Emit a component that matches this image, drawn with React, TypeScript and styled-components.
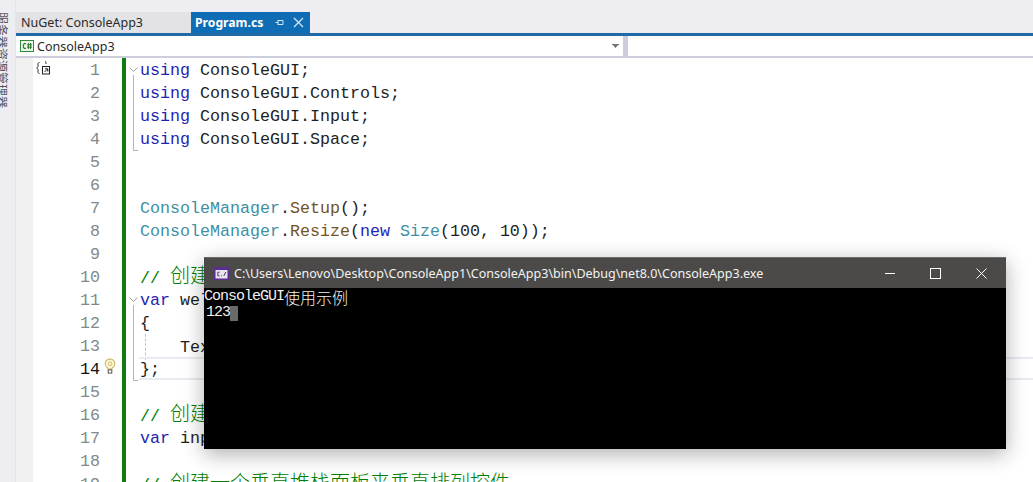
import React from 'react'
import styled, { createGlobalStyle } from 'styled-components'

type TokenKind = 'plain' | 'keyword' | 'type' | 'method' | 'comment'

interface CodeToken {
  kind: TokenKind
  text: string
}

interface CodeLine {
  tokens: CodeToken[]
  fold?: 'open' | 'mid' | 'end'
  guide?: boolean
  current?: boolean
}

const t = (kind: TokenKind, text: string): CodeToken => ({ kind, text })

const LINES: CodeLine[] = [
  { fold: 'open', tokens: [t('keyword', 'using'), t('plain', ' ConsoleGUI;')] },
  { fold: 'mid', tokens: [t('keyword', 'using'), t('plain', ' ConsoleGUI.Controls;')] },
  { fold: 'mid', tokens: [t('keyword', 'using'), t('plain', ' ConsoleGUI.Input;')] },
  { fold: 'end', tokens: [t('keyword', 'using'), t('plain', ' ConsoleGUI.Space;')] },
  { tokens: [] },
  { tokens: [] },
  { tokens: [t('type', 'ConsoleManager'), t('plain', '.'), t('method', 'Setup'), t('plain', '();')] },
  {
    tokens: [
      t('type', 'ConsoleManager'),
      t('plain', '.'),
      t('method', 'Resize'),
      t('plain', '('),
      t('keyword', 'new'),
      t('plain', ' '),
      t('type', 'Size'),
      t('plain', '(100, 10));'),
    ],
  },
  { tokens: [] },
  { tokens: [t('comment', '// 创建欢迎标签')] },
  {
    fold: 'open',
    tokens: [t('keyword', 'var'), t('plain', ' welcome = '), t('keyword', 'new'), t('plain', ' '), t('type', 'TextBlock')],
  },
  { fold: 'mid', tokens: [t('plain', '{')] },
  { fold: 'mid', guide: true, tokens: [t('plain', '    Text = "ConsoleGUI使用示例"')] },
  { fold: 'end', current: true, tokens: [t('plain', '};')] },
  { tokens: [] },
  { tokens: [t('comment', '// 创建输入框')] },
  { tokens: [t('keyword', 'var'), t('plain', ' input = '), t('keyword', 'new'), t('plain', ' '), t('type', 'TextBox'), t('plain', '();')] },
  { tokens: [] },
  { tokens: [t('comment', '// 创建一个垂直堆栈面板来垂直排列控件')] },
]

const TOKEN_COLORS: Record<TokenKind, string> = {
  plain: '#1e1e1e',
  keyword: '#1f1fb4',
  type: '#3f8fa3',
  method: '#74531f',
  comment: '#008000',
}

const GlobalStyle = createGlobalStyle`
  html, body {
    margin: 0;
    padding: 0;
    background: #eeeef2;
  }
`

const Page = styled.div`
  position: relative;
  display: flex;
  width: 1033px;
  height: 482px;
  overflow: hidden;
  background: #eeeef2;
  font-family: 'Noto Sans', 'Noto Sans CJK SC', sans-serif;
`

const SideRail = styled.div`
  flex: 0 0 16px;
  overflow: hidden;
  padding-top: 12px;
  box-sizing: border-box;
  border-right: 1px solid #e4e4ea;
`

const SideLabel = styled.div`
  margin-left: -4px;
  writing-mode: vertical-rl;
  text-orientation: sideways;
  font-family: 'Noto Sans CJK SC', sans-serif;
  font-size: 12px;
  line-height: 12px;
  color: #55555f;
`

const Dock = styled.div`
  flex: 1;
  min-width: 0;
  display: flex;
  flex-direction: column;
  padding-top: 12px;
`

const TabStrip = styled.div`
  display: flex;
  height: 21px;
  flex: none;
`

const InactiveTab = styled.div`
  width: 175px;
  padding-left: 5px;
  box-sizing: border-box;
  background: #e3e3e6;
  color: #2a2a2a;
  font-size: 12.5px;
  line-height: 21px;
`

const ActiveTab = styled.div`
  display: flex;
  align-items: center;
  width: 119px;
  padding-left: 4px;
  box-sizing: border-box;
  background: #0e6db4;
  color: #fff;
  font-size: 12.2px;
  font-weight: 700;
  line-height: 21px;
`

const TabName = styled.span`
  flex: 0 0 80px;
`

const TabIcon = styled.svg`
  flex: none;
  display: block;
`

const CloseIcon = styled(TabIcon)`
  margin-left: 9px;
`

const TabRule = styled.div`
  flex: none;
  height: 3px;
  background: #1f69a6;
`

const NavBar = styled.div`
  flex: none;
  display: flex;
  height: 20px;
  background: #fff;
`

const NavCombo = styled.div`
  display: flex;
  align-items: center;
  width: 607px;
  padding: 0 4px;
  box-sizing: border-box;
  color: #2a2a2a;
  font-size: 12.5px;
`

const NavName = styled.span`
  margin-left: 3px;
  flex: 1;
`

const NavSplit = styled.div`
  width: 5px;
  background: #cccedb;
`

const NavRule = styled.div`
  flex: none;
  height: 2px;
  background: #cccedb;
`

const Editor = styled.div`
  flex: 1;
  min-height: 0;
  display: flex;
  background: #fff;
`

const SelectionMargin = styled.div`
  flex: 0 0 17px;
  background: #f0f0f0;
`

const CodeArea = styled.div`
  flex: 1;
  min-width: 0;
`

const Row = styled.div`
  display: grid;
  grid-template-columns: 67px 22px 4px 14px 1fr;
  height: 23px;
`

const LineNumber = styled.div<{ $current?: boolean }>`
  display: flex;
  justify-content: space-between;
  align-items: flex-start;
  font-family: 'Liberation Mono', monospace;
  font-size: 16.67px;
  line-height: 25px;
  color: ${p => (p.$current ? '#111' : '#808a8c')};
`

const SymbolGlyph = styled.svg`
  display: block;
  margin: 2px 0 0 2px;
`

const BulbCell = styled.div`
  padding-left: 4px;
`

const ChangeBar = styled.div`
  background: #107c10;
`

const FoldCell = styled.div<{ $fold?: 'open' | 'mid' | 'end' }>`
  position: relative;
  ${p =>
    p.$fold === 'mid' &&
    `
    &::before { content: ''; position: absolute; left: 7px; top: 0; bottom: 0; width: 1px; background: #b4b4b4; }
  `}
  ${p =>
    p.$fold === 'end' &&
    `
    &::before { content: ''; position: absolute; left: 7px; top: 0; bottom: 1px; width: 1px; background: #b4b4b4; }
    &::after { content: ''; position: absolute; left: 7px; bottom: 1px; width: 5px; height: 1px; background: #b4b4b4; }
  `}
`

const FoldChevron = styled.svg`
  position: absolute;
  left: 3px;
  top: 9px;
  display: block;
`

const FoldTail = styled.div`
  position: absolute;
  left: 7px;
  top: 17px;
  bottom: 0;
  width: 1px;
  background: #b4b4b4;
`

const CodeText = styled.div<{ $current?: boolean; $guide?: boolean }>`
  position: relative;
  font-family: 'Liberation Mono', monospace;
  font-size: 16.67px;
  line-height: 25px;
  white-space: pre;
  margin-left: -1px;
  padding-left: 1px;
  box-sizing: border-box;
  ${p =>
    p.$current &&
    `
    line-height: 21px;
    height: 23px;
    border-top: 2px solid #eaeaf2;
    border-bottom: 2px solid #eaeaf2;
  `}
  ${p =>
    p.$guide &&
    `
    &::before { content: ''; position: absolute; left: 6px; top: 0; bottom: 0; border-left: 1px dashed #c4c4c4; }
  `}
`

const Token = styled.span<{ $kind: TokenKind }>`
  color: ${p => TOKEN_COLORS[p.$kind]};
`

const Wide = styled.span`
  font-family: 'Noto Sans CJK SC', sans-serif;
  font-size: 20px;
  font-weight: 300;
  line-height: 1;
`

const ConsoleWindow = styled.div`
  position: absolute;
  left: 204px;
  top: 257px;
  width: 802px;
  height: 192px;
  display: flex;
  flex-direction: column;
  background: #000;
  box-shadow: 0 5px 20px rgba(0, 0, 0, 0.32);
`

const ConsoleTitleBar = styled.div`
  flex: 0 0 31px;
  display: flex;
  align-items: center;
  padding-left: 10px;
  background: #4c4a48;
  border-top: 1px solid #6a6a6a;
  box-sizing: border-box;
`

const ConsoleTitle = styled.span`
  flex: 1;
  margin-left: 5px;
  color: #f2f2f2;
  font-family: 'Noto Sans', sans-serif;
  font-size: 12.53px;
  white-space: nowrap;
`

const WindowButtons = styled.div`
  display: flex;
  align-items: center;
  gap: 35px;
  padding-right: 19px;
`

const ConsoleBody = styled.div`
  flex: 1;
  padding-top: 1px;
  color: #f2f2f2;
  font-family: 'Liberation Mono', monospace;
  font-size: 15px;
  letter-spacing: -1px;
  line-height: 16px;
`

const ConsoleRow = styled.div`
  display: flex;
  align-items: center;
  height: 16px;
  white-space: pre;
`

const ConsoleCjk = styled.span`
  font-family: 'Noto Sans CJK SC', sans-serif;
  font-size: 16px;
  font-weight: 300;
  letter-spacing: 0;
  line-height: 16px;
`

const ConsoleCursor = styled.span`
  display: block;
  width: 8px;
  height: 15px;
  background: #6a6a6a;
`

const ConsoleIndent = styled.span`
  display: block;
  width: 2px;
`

const CsIcon: React.FC = () => (
  <svg width="14" height="12" viewBox="0 0 14 12">
    <rect x="0.5" y="0.5" width="13" height="11" fill="#eaf5ea" stroke="#2f8a3a" />
    <path d="M6 3.6H4.4L3.4 4.6v2.8l1 1H6" fill="none" stroke="#2f7a34" strokeWidth="1.1" />
    <path d="M8.4 3v6M10.6 3v6M7 4.8h5M7 7.2h5" stroke="#2f7a34" strokeWidth="1" />
  </svg>
)

const PeekGlyph: React.FC = () => (
  <SymbolGlyph width="16" height="16" viewBox="0 0 16 16">
    <path d="M4.5 2.5C3 2.5 3 3.5 3 5v1.5L1.8 8 3 9.5V11c0 1.5 0 2.5 1.5 2.5" fill="none" stroke="#333" strokeWidth="1" />
    <path d="M10 1.5c1 0 1 1 1 2.5" fill="none" stroke="#333" strokeWidth="1" />
    <rect x="7.5" y="6.5" width="7" height="7.5" fill="#fff" stroke="#222" strokeWidth="1" />
    <path d="M9.5 12l3-3M10 8.8h2.8v2.8" fill="none" stroke="#222" strokeWidth="1" />
  </SymbolGlyph>
)

const BulbIcon: React.FC = () => (
  <svg width="12" height="16" viewBox="0 0 13 17.5">
    <path
      d="M6.5 1a5.2 5.2 0 0 0-3 9.4c.6.5.9 1 .9 1.6h4.2c0-.6.3-1.100.9-1.600a5.200 5.200 0 0 0-3-9.400z"
      fill="#fff8d8"
      stroke="#c9b458"
      strokeWidth="1.100"
    />
    <circle cx="6.500" cy="6.200" r="2" fill="none" stroke="#c9b458" strokeWidth="1" />
    <rect x="4.500" y="13" width="4" height="3.500" fill="#fff" stroke="#444" strokeWidth="1" />
  </svg>
)

const ConsoleIcon: React.FC = () => (
  <svg width="15" height="13" viewBox="0 0 15 13">
    <rect x="0" y="0" width="15" height="13" fill="#5c2d91" />
    <rect x="1.500" y="3" width="12" height="8.500" fill="#e8e4ee" />
    <path d="M5.500 5.200H3.800v3.600h1.700M7 8.800h.9M11.800 5l-2 4" fill="none" stroke="#4a3a70" strokeWidth="1" />
  </svg>
)

// wraps the CJK runs so they get the double-width look of the editor font
function renderText(text: string) {
  return text.split(/([\u4e00-\u9fff]+)/).map((part, i) =>
    /[\u4e00-\u9fff]/.test(part) ? <Wide key={i}>{part}</Wide> : <React.Fragment key={i}>{part}</React.Fragment>,
  )
}

const App: React.FC = () => (
  <Page>
    <GlobalStyle />
    <SideRail>
      <SideLabel>服务器资源管理器</SideLabel>
    </SideRail>
    <Dock>
      <TabStrip>
        <InactiveTab>NuGet: ConsoleApp3</InactiveTab>
        <ActiveTab>
          <TabName>Program.cs</TabName>
          <TabIcon width="9" height="9" viewBox="0 0 9 9">
            <path d="M0.500 4.500H3M3 2v5M3 2.500h5M3 6.500h5M8 2.500v4" fill="none" stroke="#d5e6f3" strokeWidth="1" />
          </TabIcon>
          <CloseIcon width="11" height="11" viewBox="0 0 11 11">
            <path d="M1 1l9 9M10 1l-9 9" stroke="#d5e6f3" strokeWidth="1.300" />
          </CloseIcon>
        </ActiveTab>
      </TabStrip>
      <TabRule />
      <NavBar>
        <NavCombo>
          <CsIcon />
          <NavName>ConsoleApp3</NavName>
          <svg width="7" height="4" viewBox="0 0 7 4">
            <path d="M0 0h7v1H6L3.500 4 1 1H0z" fill="#707070" />
          </svg>
        </NavCombo>
        <NavSplit />
      </NavBar>
      <NavRule />
      <Editor>
        <SelectionMargin />
        <CodeArea>
          {LINES.map((line, i) => (
            <Row key={i}>
              <LineNumber $current={line.current}>
                {i === 0 ? <PeekGlyph /> : <span />}
                <span>{i + 1}</span>
              </LineNumber>
              <BulbCell>{line.current && <BulbIcon />}</BulbCell>
              <ChangeBar />
              <FoldCell $fold={line.fold}>
                {line.fold === 'open' && (
                  <>
                    <FoldChevron width="9" height="6" viewBox="0 0 9 6">
                      <path d="M0.500 0.500L4.500 4.500L8.500 0.500" fill="none" stroke="#a0a0a0" strokeWidth="1" />
                    </FoldChevron>
                    <FoldTail />
                  </>
                )}
              </FoldCell>
              <CodeText $current={line.current} $guide={line.guide}>
                {line.tokens.map((token, j) => (
                  <Token key={j} $kind={token.kind}>
                    {renderText(token.text)}
                  </Token>
                ))}
              </CodeText>
            </Row>
          ))}
        </CodeArea>
      </Editor>
    </Dock>
    <ConsoleWindow>
      <ConsoleTitleBar>
        <ConsoleIcon />
        <ConsoleTitle>C:\Users\Lenovo\Desktop\ConsoleApp1\ConsoleApp3\bin\Debug\net8.0\ConsoleApp3.exe</ConsoleTitle>
        <WindowButtons>
          <svg width="10" height="10" viewBox="0 0 10 10">
            <path d="M0 5.500h10" stroke="#fff" strokeWidth="1" />
          </svg>
          <svg width="11" height="11" viewBox="0 0 11 11">
            <rect x="0.500" y="0.500" width="10" height="10" fill="none" stroke="#fff" strokeWidth="1" />
          </svg>
          <svg width="11" height="11" viewBox="0 0 11 11">
            <path d="M0.500 0.500l10 10M10.500 0.500l-10 10" stroke="#fff" strokeWidth="1" />
          </svg>
        </WindowButtons>
      </ConsoleTitleBar>
      <ConsoleBody>
        <ConsoleRow>
          ConsoleGUI<ConsoleCjk>使用示例</ConsoleCjk>
        </ConsoleRow>
        <ConsoleRow>
          <ConsoleIndent />
          123
          <ConsoleCursor />
        </ConsoleRow>
      </ConsoleBody>
    </ConsoleWindow>
  </Page>
)

export default App
